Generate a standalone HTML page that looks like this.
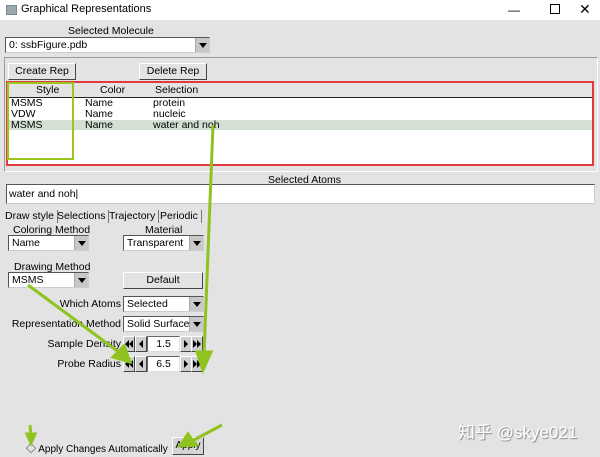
<!DOCTYPE html>
<html><head><style>
body{margin:0;width:600px;height:457px;background:#e3e3e3;font-family:"Liberation Sans","Noto Sans CJK SC",sans-serif;font-size:10.5px;color:#000;position:relative;overflow:hidden}
.a{position:absolute;white-space:nowrap}
.r{position:absolute;white-space:nowrap;right:479px;text-align:right}
.combo{position:absolute;background:#fff;border:1px solid #555;border-right-color:#ccc;border-bottom-color:#ccc;height:14px;line-height:14px;padding-left:3px;box-sizing:content-box;overflow:hidden}
.combo .ar{position:absolute;right:0;top:0;width:13px;height:14px;background:#c8c8c8;border-left:1px solid #aaa}
.combo .ar:after{content:"";position:absolute;left:3px;top:5px;border-left:4px solid transparent;border-right:4px solid transparent;border-top:5px solid #000}
.btn{position:absolute;background:#e3e3e3;border:1px solid #fff;border-right-color:#444;border-bottom-color:#444;text-align:center;line-height:15px}
.sb{position:absolute;width:10px;height:14px;background:#cfcfcf;border:1px solid #fff;border-right-color:#444;border-bottom-color:#444}
.sb svg{position:absolute;left:0;top:0}
.fld{position:absolute;background:#fff;border:1px solid #666;border-right-color:#ddd;border-bottom-color:#ddd;height:14px;line-height:14px;text-align:center}
.tab{position:absolute;top:210px;white-space:nowrap;border-right:1px solid #777;padding-right:3px;height:13px}
</style></head><body>
<div class="a" style="left:0;top:0;width:600px;height:20px;background:#fff"></div>
<div class="a" style="left:6px;top:5px;width:9px;height:8px;background:#9aa;border:1px solid #789"></div>
<div class="a" style="left:21px;top:3px;font-size:11px">Graphical Representations</div>
<div class="a" style="left:508px;top:3px;font-size:12px">—</div>
<div class="a" style="left:550px;top:4px;width:8px;height:8px;border:1px solid #000"></div>
<div class="a" style="left:579px;top:1px;font-size:14px">✕</div>
<div class="a" style="left:68px;top:25px">Selected Molecule</div>
<div class="combo" style="left:5px;top:37px;width:200px">0: ssbFigure.pdb<div class="ar"></div></div>
<div class="a" style="left:4px;top:57px;width:592px;height:113px;border:1px solid #999;border-right-color:#fff;border-bottom-color:#fff;background:#e3e3e3"></div>
<div class="btn" style="left:8px;top:63px;width:66px;height:15px">Create Rep</div>
<div class="btn" style="left:139px;top:63px;width:66px;height:15px">Delete Rep</div>
<div class="a" style="left:7px;top:97px;width:586px;height:66px;background:#fff;border-top:1px solid #222"></div>
<div class="a" style="left:7px;top:120px;width:586px;height:10px;background:#d4e0d3"></div>
<div class="a" style="left:6px;top:81px;height:81px;border:2px solid #e03a3a;width:584px"></div>
<div class="a" style="left:36px;top:84px">Style</div>
<div class="a" style="left:100px;top:84px">Color</div>
<div class="a" style="left:155px;top:84px">Selection</div>
<div class="a" style="left:11px;top:98px;line-height:11px">MSMS<br>VDW<br>MSMS</div>
<div class="a" style="left:85px;top:98px;line-height:11px">Name<br>Name<br>Name</div>
<div class="a" style="left:153px;top:98px;line-height:11px">protein<br>nucleic<br>water and noh</div>
<div class="a" style="left:7px;top:82px;width:63px;height:74px;border:2px solid #9dc61b"></div>
<div class="a" style="left:268px;top:174px">Selected Atoms</div>
<div class="a" style="left:6px;top:184px;width:587px;height:18px;background:#fff;border:1px solid #555;border-right-color:#ccc;border-bottom-color:#ccc"></div>
<div class="a" style="left:9px;top:188px">water and noh|</div>
<div class="tab" style="left:5px">Draw style</div>
<div class="tab" style="left:57px">Selections</div>
<div class="tab" style="left:109px">Trajectory</div>
<div class="tab" style="left:160px">Periodic</div>
<div class="a" style="left:13px;top:224px">Coloring Method</div>
<div class="a" style="left:145px;top:224px">Material</div>
<div class="combo" style="left:8px;top:235px;width:76px">Name<div class="ar"></div></div>
<div class="combo" style="left:123px;top:235px;width:76px">Transparent<div class="ar"></div></div>
<div class="a" style="left:14px;top:261px">Drawing Method</div>
<div class="combo" style="left:8px;top:272px;width:76px">MSMS<div class="ar"></div></div>
<div class="btn" style="left:123px;top:272px;width:78px;height:15px">Default</div>
<div class="r" style="top:298px">Which Atoms</div>
<div class="combo" style="left:123px;top:296px;width:76px">Selected<div class="ar"></div></div>
<div class="r" style="top:318px">Representation Method</div>
<div class="combo" style="left:123px;top:316px;width:76px">Solid Surface<div class="ar"></div></div>
<div class="r" style="top:338px">Sample Density</div>
<div class="r" style="top:358px">Probe Radius</div>
<div class="sb" style="left:123px;top:336px"><svg width="10" height="14"><path d="M1 7L5 3V11Z M5 7L9 3V11Z"/></svg></div>
<div class="sb" style="left:135px;top:336px"><svg width="10" height="14"><path d="M3 7L7 3V11Z"/></svg></div>
<div class="fld" style="left:147px;top:336px;width:31px">1.5</div>
<div class="sb" style="left:180px;top:336px"><svg width="10" height="14"><path d="M7 7L3 3V11Z"/></svg></div>
<div class="sb" style="left:191px;top:336px"><svg width="10" height="14"><path d="M9 7L5 3V11Z M5 7L1 3V11Z"/></svg></div>
<div class="sb" style="left:123px;top:356px"><svg width="10" height="14"><path d="M1 7L5 3V11Z M5 7L9 3V11Z"/></svg></div>
<div class="sb" style="left:135px;top:356px"><svg width="10" height="14"><path d="M3 7L7 3V11Z"/></svg></div>
<div class="fld" style="left:147px;top:356px;width:31px">6.5</div>
<div class="sb" style="left:180px;top:356px"><svg width="10" height="14"><path d="M7 7L3 3V11Z"/></svg></div>
<div class="sb" style="left:191px;top:356px"><svg width="10" height="14"><path d="M9 7L5 3V11Z M5 7L1 3V11Z"/></svg></div>
<div class="a" style="left:26px;top:440px;font-size:10px">◇ Apply Changes Automatically</div>
<div class="btn" style="left:172px;top:437px;width:30px;height:16px;background:#d5d5d5;font-size:10px">Apply</div>
<div class="a" style="left:458px;top:418px;font-size:17px;color:#fff;text-shadow:1px 1px 1px #888">知乎 @skye021</div>
<svg class="a" style="left:0;top:0" width="600" height="457">
<g stroke="#8fc31f" stroke-width="3" fill="#8fc31f">
<line x1="213" y1="125" x2="204" y2="355"/><polygon points="197,352 211,352 203,370"/>
<line x1="28" y1="285" x2="120" y2="353"/><polygon points="113,357 124,346 130,362"/>
<line x1="30" y1="425" x2="31" y2="436"/><polygon points="27,434 35,434 31,443"/>
<line x1="222" y1="425" x2="192" y2="441"/><polygon points="188,434 196,445 180,446"/>
</g></svg>
</body></html>
